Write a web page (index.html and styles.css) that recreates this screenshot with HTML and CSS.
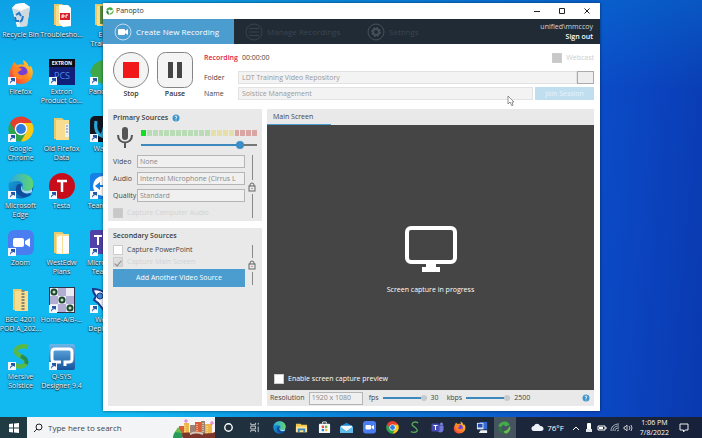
FILE: index.html
```html
<!DOCTYPE html>
<html lang="en">
<head>
<meta charset="utf-8">
<title>Desktop</title>
<link rel="stylesheet" href="styles.css">
</head>
<body>
<svg class="defs" aria-hidden="true">
  <defs>
    <linearGradient id="edge-a" x1="0" y1="0" x2="1" y2="1"><stop offset="0" stop-color="#1aa7dd"/><stop offset="1" stop-color="#0c4fa8"/></linearGradient>
    <linearGradient id="edge-b" x1="0" y1="0" x2="1" y2="0"><stop offset="0" stop-color="#2aa9e6"/><stop offset="1" stop-color="#63d66c"/></linearGradient>
    <linearGradient id="fox" x1="1" y1="0" x2="0" y2="1"><stop offset="0" stop-color="#ffdf3a"/><stop offset=".5" stop-color="#ff8a1f"/><stop offset="1" stop-color="#f0284e"/></linearGradient>
    <linearGradient id="qs" x1="0" y1="0" x2="0" y2="1"><stop offset="0" stop-color="#6cb6e8"/><stop offset="1" stop-color="#14539c"/></linearGradient>
    <symbol id="edge" viewBox="0 0 26 26"><circle cx="13" cy="13" r="12.5" fill="url(#edge-a)"/><path d="M1 10C3 3 8 .5 13 .5c8 0 12.500 5 12.500 11 0 4-3 6.500-7 6.500-3 0-4.500-1-4.500-2.500 0-1 1-1.500 1-3 0-2.500-2.500-4.500-6-4.500-4 0-6.500 1-8 2z" fill="url(#edge-b)"/><path d="M9 12c-3 5 0 12 8 12 3 0 5-1 7-3-5 1.500-11-.5-11-6 0-1 1-2 1-2.500C14 11 11 10 9 12z" fill="#0e4c9c"/><path d="M14 12c1 1-.5 2 0 4 1 2 6 3 10 0v3c-5 3-11 1-11-4z" fill="#c9f4ff" opacity=".8"/></symbol>
    <symbol id="chrome" viewBox="0 0 26 26"><path d="M13 13 2.200 6.700A12.500 12.500 0 0 1 23.800 6.700z" fill="#e43e2f"/><path d="M2.200 6.700A12.500 12.500 0 0 0 13 25.500L18.400 16 13 13z" fill="#2fa24c"/><path d="M23.800 6.700A12.500 12.500 0 0 1 13 25.500L18.400 16 13 7z" fill="#fbc916"/><path d="M2.200 6.700 8 16l5-9h10.800A12.500 12.500 0 0 0 2.200 6.700z" fill="#e43e2f"/><circle cx="13" cy="13" r="6.200" fill="#fff"/><circle cx="13" cy="13" r="4.900" fill="#2f7de1"/></symbol>
    <symbol id="firefox" viewBox="0 0 26 26"><path d="M4 7l2-4 3 3c3-1 5-1 7 0l-1-5c4 2 5 4 6 7l2-1c5 9-1 18-10 18S-2 17 4 7z" fill="url(#fox)"/><circle cx="14" cy="13" r="5.500" fill="#7540d8"/><path d="M5 9c4-2 7 0 9 1-1 2-4 2-4 4 2 3 6 3 9 0 0 5-4 7-8 6-5-1-7-6-6-11z" fill="#ff8428"/></symbol>
    <symbol id="zoomapp" viewBox="0 0 26 26"><rect width="26" height="25" rx="6" fill="#4a7df0"/><rect x="5" y="8" width="11" height="9" rx="2" fill="#fff"/><path d="M17 11l5-3v9l-5-3z" fill="#fff"/></symbol>
    <symbol id="teams" viewBox="0 0 26 26"><circle cx="21" cy="6" r="3" fill="#7b83eb"/><path d="M12 9h13v8c0 8-13 8-13 0z" fill="#7278d8"/><rect x="1" y="5" width="16" height="16" rx="2" fill="#454bb0"/><path d="M5 9h8M9 9v9" stroke="#fff" stroke-width="2"/></symbol>
    <symbol id="folder" viewBox="0 0 26 26"><path d="M5 2h8l2 2h5v19H5z" fill="#e8c96c"/><path d="M7 4h13v20H7z" fill="#f7dd8d"/></symbol>
    <symbol id="swirl" viewBox="0 0 26 26"><path d="M20 3C13 1 7 4 8 8c1 4 10 5 10 10 0 4-6 6-11 3" fill="none" stroke="#58b947" stroke-width="4.500"/><path d="M13 12c4 2 7 4 5 8" fill="none" stroke="#258e56" stroke-width="4"/></symbol>
    <symbol id="panopto" viewBox="0 0 26 26"><path d="M12 1c6-1 10 3 11 7l-8 3-4-4-5 5-5-1C1 6 6 2 12 1z" fill="#43ac49"/><path d="M1 13l7 1 1 8 4 3C5 25 0 20 1 13z" fill="#237f37"/><path d="M24 10c3 8-3 15-10 15l-3-4 7-3z" fill="#68bd50"/></symbol>
    <symbol id="arrow" viewBox="0 0 8 8"><rect width="8" height="8" fill="#f5f8ff"/><path d="M2 7c0-3 1-4 3-4H3V1h4v4L6 4C4 4 3 5 2 7z" fill="#2456a5"/></symbol>
    <symbol id="lock" viewBox="0 0 8 10"><rect x="1" y="4" width="6" height="5" fill="none" stroke="#666"/><path d="M2 4V3a2 2 0 0 1 4 0v1M4 6v1" fill="none" stroke="#666"/></symbol>
    <symbol id="help" viewBox="0 0 8 8"><circle cx="4" cy="4" r="3.500" fill="#3f96cb"/><path d="M3 3c0-1.500 2-1.300 2 0L4 4v1M4 5.500v1" fill="none" stroke="#fff" stroke-width=".8"/></symbol>
  </defs>
</svg>

<main class="desktop">
  <div class="shortcuts">
    <div class="shortcut"><svg viewBox="0 0 26 26"><path d="M4 6l4-4 8-1 6 4-3 19-10 1z" fill="#edf2f5"/><path d="M4 6l9 3 9-4-3 19-6 1z" fill="#cfdae0"/><path d="M4 6l4-4 8-1 6 4-9 3z" fill="#fbfdfe"/><path d="M8 13l3-2 2 3M7 15l1 4h3M15 14l-1 4-2 2" fill="none" stroke="#2279c6" stroke-width="2"/></svg><span>Recycle Bin</span></div>
    <div class="shortcut"><svg viewBox="0 0 26 26"><use href="#folder"/><path d="M10 3h9l3 3v18l-8 1-4-4z" fill="#fff"/><rect x="11" y="11" width="10" height="7" fill="#d9202b"/><path d="M13 16v-3h2v2h-2m4 1v-3h2" fill="none" stroke="#fff"/></svg><span>Troublesho...</span></div>
    <div class="shortcut"><svg viewBox="0 0 26 26"><use href="#folder"/><path d="M10 4h9v18h-9z" fill="#578d42"/></svg><span>EE<br>Traini...</span></div>

    <div class="shortcut"><svg viewBox="0 0 26 26"><use href="#firefox"/><use href="#arrow" x="0" y="18" width="8" height="8"/></svg><span>Firefox</span></div>
    <div class="shortcut"><svg viewBox="0 0 26 26"><rect width="26" height="26" fill="#101f78"/><rect width="26" height="8" fill="#0c0d14"/><text x="13" y="6" class="logo-small">EXTRON</text><text x="13" y="20" class="logo-pcs">PCS</text><use href="#arrow" x="0" y="18" width="8" height="8"/></svg><span>Extron<br>Product Co...</span></div>
    <div class="shortcut"><svg viewBox="0 0 26 26"><path d="M0 13Q4 2 13 1l13 9v12L13 25Q4 23 0 13z" fill="#3fa848"/><use href="#arrow" x="0" y="18" width="8" height="8"/></svg><span>Panopto</span></div>

    <div class="shortcut"><svg viewBox="0 0 26 26"><use href="#chrome"/><use href="#arrow" x="0" y="18" width="8" height="8"/></svg><span>Google<br>Chrome</span></div>
    <div class="shortcut"><svg viewBox="0 0 26 26"><use href="#folder"/><path d="M16 8h4v13h-4z" fill="#e8f0f5"/><path d="M17 10h2m-2 3h2m-2 3h2" stroke="#6185aa"/></svg><span>Old Firefox<br>Data</span></div>
    <div class="shortcut"><svg viewBox="0 0 26 26"><rect width="26" height="26" rx="5" fill="#11151f"/><path d="M6 5q-2 12 6 15l4-15 6 14" fill="none" stroke="#27a7d8" stroke-width="3"/><use href="#arrow" x="0" y="18" width="8" height="8"/></svg><span>Wave</span></div>

    <div class="shortcut"><svg viewBox="0 0 26 26"><use href="#edge"/><use href="#arrow" x="0" y="18" width="8" height="8"/></svg><span>Microsoft<br>Edge</span></div>
    <div class="shortcut"><svg viewBox="0 0 26 26"><circle cx="13" cy="13" r="13" fill="#c80d1a"/><path d="M8 8h10M13 8v11" stroke="#fff" stroke-width="2.500"/><use href="#arrow" x="0" y="18" width="8" height="8"/></svg><span>Testa</span></div>
    <div class="shortcut"><svg viewBox="0 0 26 26"><rect width="26" height="26" rx="4" fill="#1680e4"/><circle cx="13" cy="13" r="10" fill="#fff"/><path d="M5 13l5-4v3h6V9l5 4-5 4v-3h-6v3z" fill="#1680e4"/><use href="#arrow" x="0" y="18" width="8" height="8"/></svg><span>TeamVi...</span></div>

    <div class="shortcut"><svg viewBox="0 0 26 26"><use href="#zoomapp"/><use href="#arrow" x="0" y="18" width="8" height="8"/></svg><span>Zoom</span></div>
    <div class="shortcut"><svg viewBox="0 0 26 26"><use href="#folder"/><path d="M8 7l5-2v19l-5-1zM14 6h6v17l-6 1z" fill="#fafcff"/></svg><span>WestEdw<br>Plans</span></div>
    <div class="shortcut"><svg viewBox="0 0 26 26"><rect width="26" height="24" rx="2" fill="#5142a7"/><path d="M4 6h8M8 6v9" stroke="#fff" stroke-width="2"/><use href="#arrow" x="0" y="18" width="8" height="8"/></svg><span>Microsoft<br>Teams</span></div>

    <div class="shortcut"><svg viewBox="0 0 26 26"><use href="#folder"/><path d="M15 3v21" stroke="#8c8875" stroke-width="3" stroke-dasharray="2 1"/></svg><span>BEC 4201<br>POD A_202...</span></div>
    <div class="shortcut"><svg viewBox="0 0 26 26"><rect x=".5" y=".5" width="25" height="25" fill="#eceaf5" stroke="#303348"/><path d="M9 1h8v8H9zM1 9h8v8H1zM17 9h8v8h-8zM9 17h8v8H9z" fill="#b2add2"/><g fill="#cfdccb" stroke="#184b29" stroke-width="2"><circle cx="5" cy="5" r="2.500"/><circle cx="13" cy="13" r="2.500"/><circle cx="21" cy="21" r="2.500"/></g><use href="#arrow" x="0" y="18" width="8" height="8"/></svg><span>Home-A/B-...</span></div>
    <div class="shortcut"><svg viewBox="0 0 26 26"><path d="M3 2c9 0 15 5 18 14l-3 3-3 6-3-4-4-5-4-3 2-4C4 7 3 5 3 2z" fill="#f5f9ff" stroke="#193a8c" stroke-width="2"/><circle cx="10" cy="9" r="3" fill="#3b86d8" stroke="#193a8c"/><use href="#arrow" x="0" y="18" width="8" height="8"/></svg><span>Web<br>Deploy...</span></div>

    <div class="shortcut"><svg viewBox="0 0 26 26"><use href="#swirl"/><use href="#arrow" x="0" y="18" width="8" height="8"/></svg><span>Mersive<br>Solstice</span></div>
    <div class="shortcut"><svg viewBox="0 0 26 26"><rect width="26" height="26" rx="2" fill="url(#qs)"/><path d="M12 18H6q-3 0-3-3V8q0-3 3-3h14q3 0 3 3v7q0 3-3 3h-4v4" fill="none" stroke="#fff" stroke-width="3"/><use href="#arrow" x="0" y="18" width="8" height="8"/></svg><span>Q-SYS<br>Designer 9.4</span></div>
  </div>

  <section class="window">
    <header class="titlebar">
      <svg class="app-icon"><use href="#panopto"/></svg>
      <span class="app-name">Panopto</span>
      <button class="caption" aria-label="Minimize"><svg viewBox="0 0 8 8"><path d="M1 4.500h6"/></svg></button>
      <button class="caption" aria-label="Maximize"><svg viewBox="0 0 8 8"><path d="M1.500 1.500h5v5h-5z"/></svg></button>
      <button class="caption" aria-label="Close"><svg viewBox="0 0 8 8"><path d="M1.500 1.500l5 5m0-5l-5 5"/></svg></button>
    </header>

    <nav class="navbar">
      <button class="nav-tab active"><svg viewBox="0 0 18 18"><circle cx="9" cy="9" r="8" fill="none" stroke="#bfdcef"/><rect x="4" y="6" width="7" height="6" rx="1" fill="#fff"/><path d="M11 8l3-2v6l-3-2z" fill="#fff"/></svg>Create New Recording</button>
      <button class="nav-tab manage" disabled><svg viewBox="0 0 18 18"><g fill="none" stroke="#39434e"><circle cx="9" cy="9" r="8"/><path d="M4 5.500h10M4 9h10M4 12.500h10"/></g></svg>Manage Recordings</button>
      <button class="nav-tab settings" disabled><svg viewBox="0 0 18 18"><g fill="none" stroke="#46505b"><circle cx="9" cy="9" r="8"/><circle cx="9" cy="9" r="3" stroke-width="2"/><circle cx="9" cy="9" r="4.500" stroke-dasharray="2 1.500"/></g></svg>Settings</button>
      <div class="account"><span>unified\mmccoy</span><a href="#">Sign out</a></div>
    </nav>

    <div class="content">
      <div class="session">
        <div class="transport">
          <button><svg viewBox="0 0 36 36"><circle cx="18" cy="18" r="17.500" fill="#f4f4f4" stroke="#858585"/><rect x="10" y="10" width="16" height="16" fill="#f01818"/></svg>Stop</button>
          <button><svg viewBox="0 0 36 36"><rect x=".5" y=".5" width="35" height="35" rx="8" fill="#f4f4f4" stroke="#858585"/><path d="M11 10h5v16h-5zM20 10h5v16h-5z" fill="#454545"/></svg>Pause</button>
        </div>
        <div class="details">
          <div class="status"><strong>Recording</strong><span>00:00:00</span><label class="webcast"><input type="checkbox" class="box muted" disabled>Webcast</label></div>
          <div class="detail-row"><label for="folder">Folder</label><input id="folder" class="field" value="LDT Training Video Repository" disabled><button class="browse" aria-label="Browse" disabled></button></div>
          <div class="detail-row"><label for="name">Name</label><input id="name" class="field" value="Solstice Management" disabled><button class="join" disabled>Join Session</button></div>
        </div>
      </div>

      <div class="workspace">
        <aside class="sources">
          <section class="panel primary">
            <h2>Primary Sources <svg class="help"><use href="#help"/></svg></h2>
            <div class="audio">
              <svg class="mic" viewBox="0 0 16 22"><rect x="5" y="0" width="6" height="13" rx="3" fill="#555"/><path d="M1 8c0 10 14 10 14 0M8 16v5" fill="none" stroke="#555" stroke-width="2"/></svg>
              <div class="levels">
                <div class="meter"><i class="on"></i><i></i><i></i><i></i><i></i><i></i><i></i><i></i><i></i><i></i><i></i><i></i><i class="mid"></i><i class="mid"></i><i class="mid"></i><i class="mid"></i><i class="high"></i><i class="high"></i><i class="high"></i><i class="high"></i></div>
                <input type="range" class="slider volume" aria-label="Volume" value="88">
              </div>
            </div>
            <div class="source-body">
              <div class="source-form">
                <label for="video">Video</label><select id="video" disabled><option>None</option></select>
                <label for="audio">Audio</label><select id="audio" disabled><option>Internal Microphone (Cirrus L</option></select>
                <label for="quality">Quality</label><select id="quality" disabled><option>Standard</option></select>
                <label class="check faded wide"><input type="checkbox" class="box muted" disabled>Capture Computer Audio</label>
              </div>
              <div class="link"><svg><use href="#lock"/></svg></div>
            </div>
          </section>
          <section class="panel secondary">
            <h2>Secondary Sources</h2>
            <div class="source-body">
              <div class="secondary-form">
                <label class="check"><input type="checkbox" class="box">Capture PowerPoint</label>
                <label class="check faded"><input type="checkbox" class="box ticked" checked disabled>Capture Main Screen</label>
                <button class="add">Add Another Video Source</button>
              </div>
              <div class="link"><svg><use href="#lock"/></svg></div>
            </div>
          </section>
        </aside>

        <section class="screen">
          <div class="tabs"><button>Main Screen</button></div>
          <div class="preview">
            <div class="progress"><svg viewBox="0 0 52 46"><rect x="2" y="2" width="48" height="34" rx="4" fill="none" stroke="#fff" stroke-width="4"/><path d="M21 37h10v4h4v5H17v-5h4z" fill="#fff"/></svg><span>Screen capture in progress</span></div>
            <label class="check"><input type="checkbox" class="box">Enable screen capture preview</label>
          </div>
          <footer class="quality">
            <label for="res">Resolution</label><select id="res" disabled><option>1920 x 1080</option></select>
            <label for="fps">fps</label><input id="fps" type="range" class="slider flat" value="100" disabled><output>30</output>
            <label for="kbps">kbps</label><input id="kbps" type="range" class="slider flat" value="100" disabled><output>2500</output>
            <svg class="help"><use href="#help"/></svg>
          </footer>
        </section>
      </div>
    </div>
  </section>
  <svg class="pointer" viewBox="0 0 8 12"><path d="M1 1v8l2-2 2 4 1-1-1-3h2z" fill="#fff" stroke="#777" stroke-width=".8"/></svg>
</main>

<footer class="taskbar">
  <button class="start" aria-label="Start"><svg viewBox="0 0 10 10"><path d="M0 1l4-.5v4H0zM5 .4L10 0v4.500H5zM0 5.500h4v4L0 9zM5 5.500h5V10l-5-.5z" fill="#fff"/></svg></button>
  <label class="search"><svg class="glass" viewBox="0 0 10 10"><circle cx="6" cy="4" r="3" fill="none" stroke="#222"/><path d="M4 6L1 9" stroke="#222"/></svg><input type="text" aria-label="Search" placeholder="Type here to search">
    <svg class="scene" viewBox="0 0 42 20"><path d="M6 8h5v9H6zM22 4h6v13h-6z" fill="#d95c38"/><path d="M11 5h5v12h-5zM31 6h8v11h-8z" fill="#edb64b"/><path d="M17 7h5v10h-5zM28 3h4v14h-4z" fill="#9b8178"/><path d="M12 7v8M24 6v9M34 8v7M30 5v10" stroke="#fff1b5" stroke-dasharray="1 1"/><path d="M13 1v4M11 3h4M39 3v4M37 5h4" stroke="#e46cdd"/><path d="M7 16c10-4 26 2 35-2v6H10z" fill="#7c352b"/><path d="M0 20c0-5 3-8 6-8 3 1 4 4 3 8z" fill="#299b58"/><path d="M2 14l3-5 4 6z" fill="#69bd51"/><path d="M17 16q6-3 13 0" stroke="#d5c7b8" fill="none" stroke-width="2"/></svg>
  </label>
  <div class="apps">
    <button aria-label="Cortana"><svg viewBox="0 0 14 14"><circle cx="7" cy="7" r="4" fill="none" stroke="#fff" stroke-width="1.500"/></svg></button>
    <button class="taskview" aria-label="Task view"><svg viewBox="0 0 14 14"><path d="M3 2v2h5V2M3 12v-2h5v2M3 5.500h5v3H3zM11 2v2m0 2v6" fill="none" stroke="#cbd2d5"/></svg></button>
    <button aria-label="Edge"><svg><use href="#edge"/></svg></button>
    <button aria-label="File Explorer"><svg viewBox="0 0 14 14"><path d="M1 3h5l1 1h6v8H1z" fill="#f4c84e"/><path d="M1 6h12v6H1z" fill="#ffe28b"/><path d="M3 12V8h8v4H9v-2H5v2z" fill="#3887c3"/></svg></button>
    <button aria-label="Store"><svg viewBox="0 0 14 14"><path d="M5 3V1h4v2" fill="none" stroke="#eee"/><rect x="1" y="3" width="12" height="10" rx="1" fill="#f6f8fa"/><path d="M4 5h2.500v2.500H4z" fill="#ec4b35"/><path d="M7.500 5H10v2.500H7.500z" fill="#73b43b"/><path d="M4 8.500h2.500V11H4z" fill="#2387dc"/><path d="M7.500 8.500H10V11H7.500z" fill="#f0bd2c"/></svg></button>
    <button aria-label="Mail"><svg viewBox="0 0 14 14"><path d="M0 6l7-4 7 4v7H0z" fill="#2288cf"/><path d="M1 5h12v2l-6 4-6-4z" fill="#f5fafd"/><path d="M0 6l7 5 7-5v7H0z" fill="#62bdeb"/></svg></button>
    <button aria-label="Zoom"><svg><use href="#zoomapp"/></svg></button>
    <button aria-label="Chrome"><svg><use href="#chrome"/></svg></button>
    <button aria-label="Solstice"><svg viewBox="0 0 14 14"><path d="M11 2C7 0 4 2 4.500 4s5.500 3 5.500 6c0 2-4 3-7 1.500" fill="none" stroke="#56a657" stroke-width="1.500"/></svg></button>
    <button aria-label="Teams"><svg><use href="#teams"/></svg></button>
    <button aria-label="Firefox"><svg><use href="#firefox"/></svg></button>
    <button aria-label="Remote Desktop"><svg viewBox="0 0 14 14"><path d="M4 1h8v8H4z" fill="#386bd5"/><path d="M1 2h7v7H1z" fill="#d9e6fa"/><path d="M2 3h5v4H2z" fill="#244dab"/><path d="M5 10h7v3H3z" fill="#edf0f5"/></svg></button>
    <button class="current" aria-label="Panopto"><svg><use href="#panopto"/></svg></button>
  </div>
  <div class="tray">
    <svg class="cloud" viewBox="0 0 13 9"><path d="M3 8a2.500 2.500 0 0 1 0-5c1-3 5-3 6 0 4-.5 5 5 1 5z" fill="#edf1f7"/></svg><span class="temp">76°F</span>
    <svg viewBox="0 0 10 10"><path d="M2 7l3-3 3 3" fill="none" stroke="#fff"/></svg>
    <svg viewBox="0 0 10 10"><rect x="3" y="0" width="4" height="7" rx="1" fill="#fff"/><path d="M2 6h6v3H2z" fill="#dfe4ea"/></svg>
    <svg viewBox="0 0 10 10"><path d="M1 3h7v4H1zM9 4v2" fill="none" stroke="#fff"/><path d="M2 4h4v2H2z" fill="#fff"/></svg>
    <svg viewBox="0 0 10 10"><path d="M1 8c0-4 3-7 8-7M3 8c0-3 2-5 6-5M5 8c0-2 1-3 4-3M7 8l2-1" fill="none" stroke="#aeb6c1"/></svg>
    <svg viewBox="0 0 10 10"><path d="M1 4h1l2-2v6L2 6H1zM6 3q2 2 0 4M8 2q2 3 0 6" fill="none" stroke="#eee" stroke-width=".8"/></svg>
    <div class="clock"><span>1:06 PM</span><span>7/8/2022</span></div>
    <svg class="notice" viewBox="0 0 10 10"><path d="M1 1h8v6H6L4.500 9V7H1z" fill="none" stroke="#eee"/></svg>
  </div>
</footer>
</body>
</html>
```
FILE: styles.css
```css
* { box-sizing: border-box; }
html, body { height: 100%; }
body {
  margin: 0;
  display: flex;
  flex-direction: column;
  overflow: hidden;
  font-family: "Open Sans", "Noto Sans", sans-serif;
  font-size: 7px;
  line-height: 10px;
  color: #444;
}
button, input, select { font: inherit; color: inherit; margin: 0; padding: 0; border: 0; border-radius: 0; }
button { background: none; }
svg { display: block; flex: none; }
.defs { position: absolute; width: 0; height: 0; }

.desktop {
  position: relative;
  flex: 1;
  min-height: 0;
  background:
    linear-gradient(180deg, #067bd266 0, #0aa6e800 90px),
    linear-gradient(95deg, #12b9f1 0, #12b9f1 22%, #0b86dc 50%, #0b4cc8 82%, #0a39b0 100%);
}
.shortcuts {
  display: grid;
  grid-template-columns: repeat(3, 41px);
  grid-auto-rows: 57px;
  padding-top: 2px;
}
.shortcut { display: flex; flex-direction: column; align-items: center; gap: 1px; }
.shortcut svg { width: 26px; height: 26px; }
.shortcut span {
  font-size: 7px;
  line-height: 9px;
  padding-top: 1px;
  text-align: center;
  white-space: nowrap;
  color: #f0f8ff;
  text-shadow: 0 1px 1px #123, 0 0 2px #123;
}
.logo-small { font: bold 5px "Open Sans", sans-serif; fill: #fff; text-anchor: middle; }
.logo-pcs { font: 9px "Open Sans", sans-serif; fill: #4c87ea; text-anchor: middle; }

.window {
  position: absolute;
  inset: 3px 102px 6px 103px;
  display: flex;
  flex-direction: column;
  background: #fff;
  box-shadow: 0 0 3px #0008;
}
.titlebar { display: flex; align-items: center; height: 16px; padding: 0 1px 0 3px; }
.app-icon { width: 8px; height: 8px; margin-right: 2px; }
.app-name { flex: 1; color: #333; }
.caption { width: 25px; height: 16px; display: grid; place-items: center; }
.caption svg { width: 8px; height: 8px; fill: none; stroke: #222; }

.navbar { display: flex; height: 25px; background: #212b35; }
.nav-tab { display: flex; align-items: center; gap: 4px; padding: 0 11px; font-size: 8px; color: #3b4550; }
.nav-tab svg { width: 18px; height: 18px; }
.nav-tab.active { width: 131px; background: #4b9ccf; color: #fff; }
.nav-tab.manage { width: 122px; }
.account { margin-left: auto; padding: 3px 7px 0 0; display: flex; flex-direction: column; text-align: right; color: #d2d7db; }
.account a { color: #fff; font-weight: 600; text-decoration: none; }

.content { flex: 1; min-height: 0; display: flex; flex-direction: column; gap: 9px; padding: 8px 6px 5px 5px; }
.session { display: flex; gap: 11px; }
.transport { display: flex; gap: 8px; padding-left: 5px; }
.transport button { display: flex; flex-direction: column; align-items: center; gap: 1px; color: #333; font-weight: 600; }
.transport svg { width: 36px; height: 36px; }
.details { flex: 1; display: flex; flex-direction: column; gap: 3px; }
.status { display: flex; align-items: center; gap: 4px; height: 12px; margin-bottom: 4px; }
.status strong { color: #e11d48; font-weight: 600; }
.webcast { margin-left: auto; display: flex; align-items: center; gap: 4px; color: #ccc; }
.detail-row { display: flex; align-items: center; }
.detail-row label { width: 34px; }
.field { flex: 1; min-width: 0; height: 13px; padding: 0 3px; background: #f3f3f3; border: 1px solid #e2e2e2; color: #999; }
.browse { width: 17px; height: 13px; border: 1px solid #aaa; background: #eee; }
.join { width: 59px; height: 13px; margin-left: 2px; background: #bfdeef; color: #e6f4fb; }

.workspace { flex: 1; min-height: 0; display: grid; grid-template-columns: 154px 1fr; gap: 5px; }
.sources { display: flex; flex-direction: column; gap: 7px; }
.panel { background: #e9e9e9; padding: 4px 5px 0; }
.primary { height: 112px; }
.secondary { flex: 1; padding-top: 3px; }
h2 { display: flex; align-items: center; gap: 4px; margin: 0; font-size: 7px; line-height: 10px; font-weight: 600; color: #3b3b3b; }
.help { width: 8px; height: 8px; }
.audio { display: flex; gap: 8px; padding: 4px 0 5px 4px; }
.mic { width: 16px; height: 22px; }
.levels { flex: 1; display: flex; flex-direction: column; gap: 4px; padding-top: 3px; }
.meter { display: flex; gap: 1px; height: 6px; }
.meter i { flex: 1; background: #b9dcb6; }
.meter .on { background: #10e020; }
.meter .mid { background: #e6dfaa; }
.meter .high { background: #d9a6a3; }

.slider { appearance: none; width: 100%; height: 10px; background: linear-gradient(#3c89bd, #3c89bd) center / 100% 2px no-repeat; }
.slider::-webkit-slider-thumb { appearance: none; width: 8px; height: 8px; border-radius: 50%; background: #3c8fc6; }
.slider.volume { background: linear-gradient(90deg, #3c89bd 86%, #777 86%) center / 100% 2px no-repeat; }
.slider.flat { width: 44px; height: 8px; }
.slider.flat::-webkit-slider-thumb { width: 6px; height: 6px; background: #c5ccd0; }

.source-body { display: flex; gap: 2px; }
.source-form { width: 132px; display: grid; grid-template-columns: 24px 1fr; gap: 4px 0; align-items: center; }
select { appearance: none; width: 100%; height: 13px; padding: 0 2px; border: 1px solid #b5b5b5; background: #f0f0f0; color: #888; opacity: 1; }
.wide { grid-column: span 2; }
.check { display: flex; align-items: center; gap: 4px; }
.wide.check { margin-top: 2px; }
.faded { color: #d2d2d2; }
.box { appearance: none; width: 10px; height: 10px; background: #fff; border: 1px solid #ccc; }
.box.muted { background: #c8c8c8; }
.box.ticked { background: linear-gradient(135deg, #e2e2e2, #d4d4d4); display: grid; place-items: center; }
.box.ticked::after { content: ""; width: 3px; height: 6px; border: solid #888; border-width: 0 1px 1px 0; transform: rotate(40deg); }
.link { flex: 1; display: flex; flex-direction: column; align-items: center; gap: 2px; }
.link::before, .link::after { content: ""; flex: 1; width: 1px; background: #888; }
.link svg { width: 8px; height: 10px; }
.secondary-form { width: 132px; display: flex; flex-direction: column; gap: 2px; padding-top: 4px; }
.secondary .link { padding: 4px 0 2px; }
.add { height: 18px; background: #4b9ccf; color: #fff; }

.screen { display: flex; flex-direction: column; background: #e9e9e9; }
.tabs { height: 16px; display: flex; }
.tabs button { width: 64px; padding-left: 6px; text-align: left; border-bottom: 1px solid #4b9ccf; }
.preview { flex: 1; display: flex; flex-direction: column; padding: 0 7px 6px; background: #454545; color: #fff; }
.progress { flex: 1; display: flex; flex-direction: column; align-items: center; justify-content: center; gap: 13px; padding-top: 22px; }
.progress svg { width: 52px; height: 46px; }
.quality { display: flex; align-items: center; gap: 4px; height: 16px; padding: 0 4px 0 3px; }
.quality select { width: 54px; margin-right: 2px; }
.quality output { margin-right: 4px; }
.quality .help { margin-left: auto; }
.pointer { position: absolute; left: 507px; top: 95px; width: 8px; height: 12px; }

.taskbar { height: 21px; display: flex; align-items: stretch; background: linear-gradient(90deg, #203b43, #202c3c 50%, #17213a); color: #fff; }
.start { width: 27px; display: grid; place-items: center; }
.start svg { width: 10px; height: 10px; }
.search { width: 188px; display: flex; align-items: center; gap: 5px; padding-left: 6px; background: #f3f4f5; }
.glass { width: 10px; height: 10px; }
.search input { flex: 1; min-width: 0; background: none; font-size: 8px; }
.search input::placeholder { color: #444; opacity: 1; }
.scene { width: 42px; height: 20px; }
.apps { width: 301px; display: flex; justify-content: space-between; }
.apps button { width: 22px; display: grid; place-items: center; }
.apps button:first-child { width: 26px; }
.apps .taskview { width: 26px; }
.apps svg { width: 13px; height: 13px; }
.apps .current { background: #465460; }
.tray { flex: 1; display: flex; align-items: center; justify-content: flex-end; gap: 3px; padding-right: 13px; }
.tray svg { width: 10px; height: 10px; }
.tray .cloud { width: 13px; height: 9px; }
.temp { margin-right: 4px; font-size: 8px; }
.clock { display: flex; flex-direction: column; margin: 0 7px 0 4px; text-align: center; }
```
